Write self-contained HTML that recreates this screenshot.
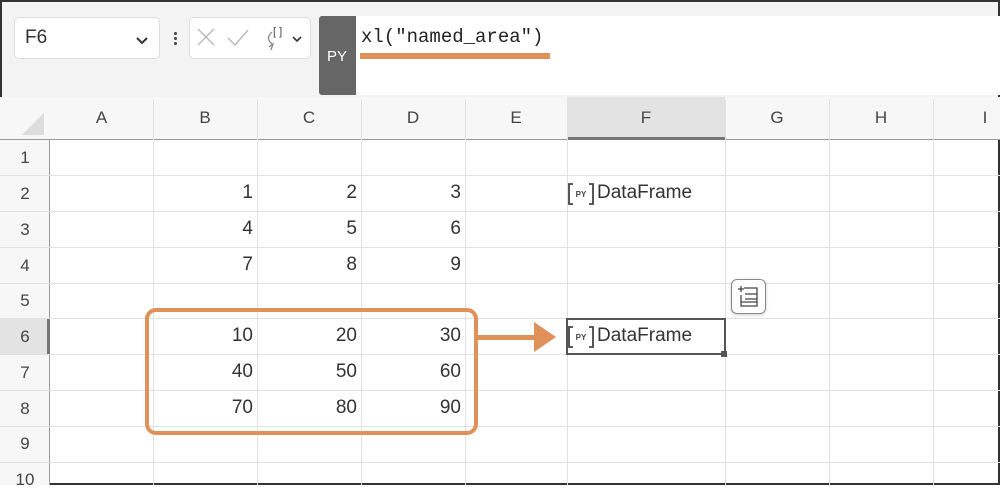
<!DOCTYPE html>
<html><head><style>
*{margin:0;padding:0;box-sizing:border-box}
body{width:1000px;height:485px;overflow:hidden;background:#fff;font-family:"Liberation Sans",sans-serif;position:relative}
.a{position:absolute}
.hl{position:absolute;height:1px;background:#e1e1e1}
.vl{position:absolute;width:1px;background:#e1e1e1}
.ch{position:absolute;top:97px;height:42px;line-height:42px;text-align:center;font-size:17px;color:#444}
.rh{position:absolute;left:0;width:50px;text-align:center;font-size:17px;color:#444}
.n{position:absolute;text-align:right;font-size:19px;color:#333}
.py{display:inline-block;width:22px;height:20px;border-left:2px solid #444;border-right:2px solid #444;font-size:8px;line-height:20px;text-align:center;vertical-align:-2px;margin-right:4px;position:relative;color:#333;font-weight:bold}
.py:before,.py:after{content:"";position:absolute;left:0;right:0;border-top:2px solid #444;top:0;margin:0 -2px;width:4px}
</style></head><body>
<div class="a" style="left:0;top:0;width:1000px;height:97px;background:#f3f3f3"></div>
<div class="a" style="left:0;top:0;width:1000px;height:2px;background:#333"></div>
<div class="a" style="left:0;top:0;width:2px;height:485px;background:#333"></div>
<div class="a" style="right:0;top:0;width:2px;height:485px;background:#333"></div>
<div class="a" style="left:0;bottom:0;width:1000px;height:2px;background:#333"></div>
<!-- name box -->
<div class="a" style="left:14px;top:17px;width:146px;height:42px;background:#fff;border:1px solid #ddd;border-radius:5px;font-size:19px;line-height:40px;padding-left:10px;color:#333">F6</div>
<svg class="a" style="left:134px;top:34px" width="20" height="14"><path d="M3 4 L8 9 L13 4" stroke="#333" stroke-width="2" fill="none"/></svg>
<div class="a" style="left:174px;top:32px;width:3px;height:3px;background:#444;border-radius:2px;box-shadow:0 5px 0 #444,0 10px 0 #444"></div>
<div class="a" style="left:189px;top:17px;width:122px;height:42px;background:#fff;border:1px solid #ddd;border-radius:5px"></div>
<svg class="a" style="left:189px;top:17px" width="122" height="42"><path d="M9 12 L25 28 M25 12 L9 28" stroke="#bbb" stroke-width="1.5"/><path d="M39 21 L46 28 L59 13" stroke="#bbb" stroke-width="1.5" fill="none"/><path d="M83 15 Q76 21 83 27 M80 30 L84 27 L82 33" stroke="#888" stroke-width="1.3" fill="none"/><text x="84" y="18" font-size="11" fill="#444" font-family="Liberation Sans">[ ]</text><path d="M104 20 L108 24 L112 20" stroke="#333" stroke-width="1.6" fill="none"/></svg>
<div class="a" style="left:319px;top:16px;width:37px;height:79px;background:#666;color:#fff;font-size:15px;line-height:18px;padding-top:32px;padding-left:8px;border-radius:3px 0 0 3px">PY</div>
<div class="a" style="left:356px;top:16px;width:644px;height:79px;background:#fff"></div>
<div class="a" style="left:361px;top:26px;font-family:'Liberation Mono',monospace;font-size:19px;color:#222">xl("named_area")</div>
<div class="a" style="left:360px;top:53px;width:190px;height:6px;background:#e0915a"></div>
<!-- headers -->
<div class="a" style="left:0;top:97px;width:1000px;height:42px;background:#f7f7f7"></div>
<div class="a" style="left:0;top:139px;width:50px;height:346px;background:#f7f7f7"></div>
<div class="a" style="left:0;top:139px;width:1000px;height:1px;background:#999"></div>
<div class="a" style="left:49px;top:139px;width:1px;height:346px;background:#999"></div>
<svg class="a" style="left:20px;top:113px" width="26" height="24"><path d="M24 0 L24 22 L2 22 Z" fill="#ddd"/></svg>
<div class="a" style="left:567px;top:97px;width:158px;height:42px;background:#e3e3e3"></div>
<div class="a" style="left:567px;top:137px;width:158px;height:3px;background:#777"></div>
<div class="a" style="left:0;top:318px;width:50px;height:36px;background:#e3e3e3"></div>
<div class="a" style="left:47px;top:318px;width:3px;height:36px;background:#777"></div>
<div class="ch" style="left:50px;width:103px">A</div>
<div class="ch" style="left:153px;width:104px">B</div>
<div class="ch" style="left:257px;width:104px">C</div>
<div class="ch" style="left:361px;width:104px">D</div>
<div class="ch" style="left:465px;width:102px">E</div>
<div class="ch" style="left:567px;width:158px">F</div>
<div class="ch" style="left:725px;width:104px">G</div>
<div class="ch" style="left:829px;width:104px">H</div>
<div class="ch" style="left:933px;width:104px">I</div>
<div class="vl" style="left:153px;top:100px;height:385px"></div>
<div class="vl" style="left:257px;top:100px;height:385px"></div>
<div class="vl" style="left:361px;top:100px;height:385px"></div>
<div class="vl" style="left:465px;top:100px;height:385px"></div>
<div class="vl" style="left:567px;top:100px;height:385px"></div>
<div class="vl" style="left:725px;top:100px;height:385px"></div>
<div class="vl" style="left:829px;top:100px;height:385px"></div>
<div class="vl" style="left:933px;top:100px;height:385px"></div>
<div class="hl" style="left:0;top:175px;width:1000px"></div>
<div class="hl" style="left:0;top:211px;width:1000px"></div>
<div class="hl" style="left:0;top:247px;width:1000px"></div>
<div class="hl" style="left:0;top:283px;width:1000px"></div>
<div class="hl" style="left:0;top:318px;width:1000px"></div>
<div class="hl" style="left:0;top:354px;width:1000px"></div>
<div class="hl" style="left:0;top:390px;width:1000px"></div>
<div class="hl" style="left:0;top:426px;width:1000px"></div>
<div class="hl" style="left:0;top:462px;width:1000px"></div>
<div class="rh" style="top:148px">1</div>
<div class="rh" style="top:184px">2</div>
<div class="rh" style="top:220px">3</div>
<div class="rh" style="top:256px">4</div>
<div class="rh" style="top:291px">5</div>
<div class="rh" style="top:327px">6</div>
<div class="rh" style="top:363px">7</div>
<div class="rh" style="top:399px">8</div>
<div class="rh" style="top:434px">9</div>
<div class="rh" style="top:470px">10</div>
<div class="n" style="left:153px;width:100px;top:182px">1</div>
<div class="n" style="left:257px;width:100px;top:182px">2</div>
<div class="n" style="left:361px;width:100px;top:182px">3</div>
<div class="n" style="left:153px;width:100px;top:218px">4</div>
<div class="n" style="left:257px;width:100px;top:218px">5</div>
<div class="n" style="left:361px;width:100px;top:218px">6</div>
<div class="n" style="left:153px;width:100px;top:254px">7</div>
<div class="n" style="left:257px;width:100px;top:254px">8</div>
<div class="n" style="left:361px;width:100px;top:254px">9</div>
<div class="n" style="left:153px;width:100px;top:325px">10</div>
<div class="n" style="left:257px;width:100px;top:325px">20</div>
<div class="n" style="left:361px;width:100px;top:325px">30</div>
<div class="n" style="left:153px;width:100px;top:361px">40</div>
<div class="n" style="left:257px;width:100px;top:361px">50</div>
<div class="n" style="left:361px;width:100px;top:361px">60</div>
<div class="n" style="left:153px;width:100px;top:397px">70</div>
<div class="n" style="left:257px;width:100px;top:397px">80</div>
<div class="n" style="left:361px;width:100px;top:397px">90</div>
<!-- F cells -->
<svg class="a" style="left:568px;top:183px" width="26" height="22"><path d="M5 1 H1 V21 H5 M21 1 H25 V21 H21" stroke="#444" stroke-width="1.8" fill="none"/><text x="13" y="14" font-size="8" text-anchor="middle" fill="#444" font-weight="bold" font-family="Liberation Sans">PY</text></svg>
<div class="a" style="left:597px;top:182px;font-size:19px;color:#333">DataFrame</div>
<div class="a" style="left:566px;top:318px;width:160px;height:37px;border:2px solid #555"></div>
<div class="a" style="left:721px;top:351px;width:6px;height:6px;background:#555"></div>
<svg class="a" style="left:568px;top:326px" width="26" height="22"><path d="M5 1 H1 V21 H5 M21 1 H25 V21 H21" stroke="#444" stroke-width="1.8" fill="none"/><text x="13" y="14" font-size="8" text-anchor="middle" fill="#444" font-weight="bold" font-family="Liberation Sans">PY</text></svg>
<div class="a" style="left:597px;top:325px;font-size:19px;color:#333">DataFrame</div>
<div class="a" style="left:731px;top:279px;width:35px;height:35px;border:1px solid #888;border-radius:6px;background:#fff;box-shadow:0 1px 3px rgba(0,0,0,.2)"></div>
<svg class="a" style="left:731px;top:279px" width="35" height="35"><path d="M13 9 H26 V27 H10 V16 M14 15 H26 M14 20 H26 M10 23 H26 M7 10 H13 M10 7 V13" stroke="#444" stroke-width="1.3" fill="none"/></svg>
<!-- orange -->
<div class="a" style="left:145px;top:308px;width:333px;height:127px;border:4px solid #e0915a;border-radius:11px"></div>
<div class="a" style="left:478px;top:335px;width:60px;height:5px;background:#e0915a"></div>
<svg class="a" style="left:534px;top:322px" width="24" height="30"><path d="M0 0 L22 15 L0 30 Z" fill="#e0915a"/></svg>
</body></html>
